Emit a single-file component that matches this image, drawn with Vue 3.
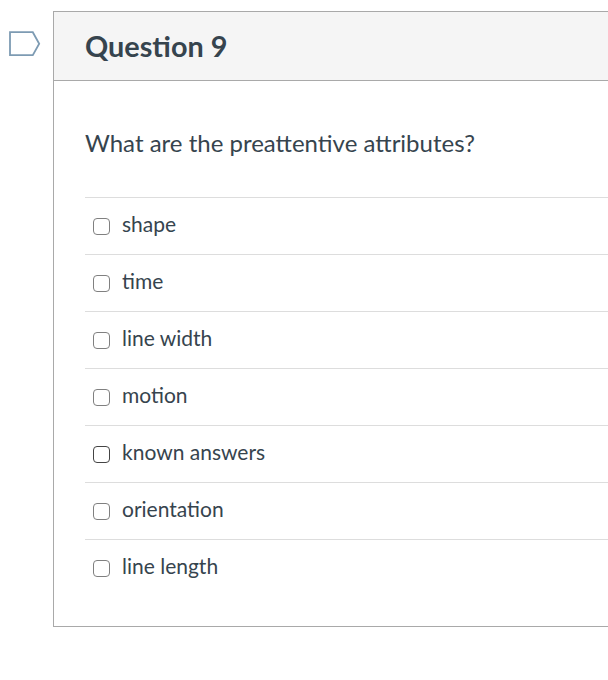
<script setup>
const answers = [
  { label: 'shape' },
  { label: 'time' },
  { label: 'line width' },
  { label: 'motion' },
  { label: 'known answers', dark: true },
  { label: 'orientation' },
  { label: 'line length' }
]
</script>

<template>
  <div class="page">
    <div class="flag">
      <svg width="32" height="26" viewBox="0 0 32 26">
        <path d="M1 1.2H23.8L30.2 12.7L23.8 24.2H1Z" fill="#fff" stroke="#7d9bb3" stroke-width="1.8" />
      </svg>
    </div>
    <div class="question">
      <div class="header">
        <h2>Question 9</h2>
      </div>
      <div class="body">
        <p class="prompt">What are the preattentive attributes?</p>
        <ul class="answers">
          <li v-for="answer in answers" :key="answer.label">
            <span :class="['box', { dark: answer.dark }]"></span>
            <span class="label">{{ answer.label }}</span>
          </li>
        </ul>
      </div>
    </div>
  </div>
</template>

<style scoped>
.page {
  display: flex;
  align-items: flex-start;
  width: 608px;
  height: 680px;
  padding-top: 11px;
  box-sizing: border-box;
  overflow: hidden;
  font-family: Lato, "Open Sans", sans-serif;
  color: #36444e;
}

.flag {
  width: 53px;
  flex: none;
  padding: 20px 0 0 9px;
  box-sizing: border-box;
  line-height: 0;
}

.question {
  flex: 1;
  border: 1px solid #a9a9a9;
  border-right: none;
  height: 616px;
  box-sizing: border-box;
}

.header {
  height: 68px;
  background: #f5f5f5;
  border-bottom: 1px solid #a9a9a9;
  padding-left: 31px;
  display: flex;
  align-items: center;
}

.header h2 {
  margin: 0;
  font-size: 28.8px;
  font-weight: 700;
}

.body {
  padding: 45px 0 0 31px;
}

.prompt {
  margin: 0 0 37px;
  font-size: 24px;
  line-height: 34px;
}

.answers {
  list-style: none;
  margin: 0;
  padding: 0;
  border-top: 1px solid #ddd;
}

.answers li {
  display: flex;
  align-items: center;
  height: 56px;
  padding-left: 8px;
  border-bottom: 1px solid #ddd;
  font-size: 21px;
}

.answers li:last-child {
  border-bottom: none;
}

.box {
  width: 15px;
  height: 15px;
  border: 1.5px solid #808080;
  border-radius: 4px;
  margin-right: 12px;
  box-sizing: content-box;
  flex: none;
}

.box.dark {
  border-color: #444;
}

.label {
  margin-bottom: 6px;
}
</style>
